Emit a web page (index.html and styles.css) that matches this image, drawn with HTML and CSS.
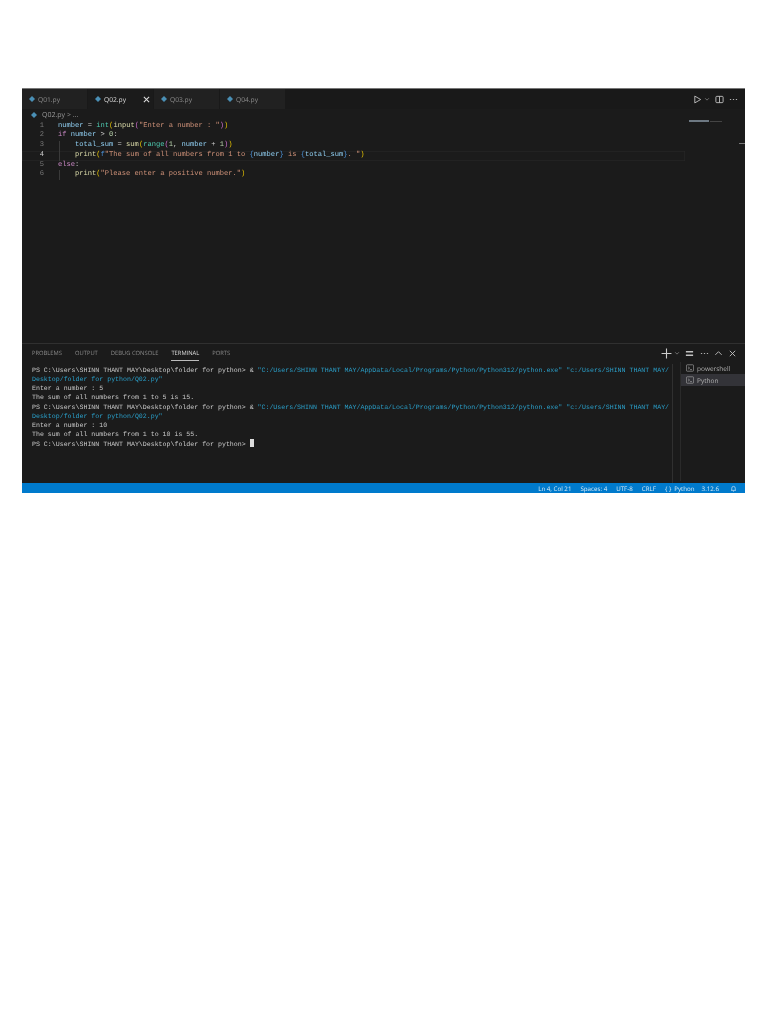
FILE: index.html
```html
<!DOCTYPE html>
<html lang="en">
<head>
<meta charset="utf-8">
<title>Q02.py</title>
<link rel="stylesheet" href="styles.css">
</head>
<body>
<main class="window">
  <header class="tabbar">
    <div class="tab"><span class="pydot"></span>Q01.py</div>
    <div class="tab active"><span class="pydot"></span>Q02.py<svg class="close" viewBox="0 0 8 8"><path d="M1 1l6 6M7 1L1 7"/></svg></div>
    <div class="tab"><span class="pydot"></span>Q03.py</div>
    <div class="tab"><span class="pydot"></span>Q04.py</div>
    <div class="actions">
      <svg class="ico" viewBox="0 0 10 10"><path d="M2 1.200v7.600L8.500 5z"/></svg>
      <svg class="ico small" viewBox="0 0 8 8"><path d="M1.500 3L4 5.500 6.500 3"/></svg>
      <svg class="ico" viewBox="0 0 10 10"><rect x="1" y="1.500" width="8" height="7" rx="1"/><path d="M5 1.500v7"/></svg>
      <svg class="ico" viewBox="0 0 10 10"><path d="M1 5h1.400M4.300 5h1.400M7.600 5H9"/></svg>
    </div>
  </header>
  <div class="crumbs"><span class="pydot"></span>Q02.py &gt; ...</div>
  <section class="editor">
    <div class="minimap"><span class="mm a"></span><span class="mm b"></span></div>
    <span class="scrollmark"></span>
    <div class="line"><span class="ln">1</span><code><i class="v">number</i> = <i class="t">int</i><i class="y">(</i><i class="f">input</i><i class="p">(</i><i class="s">"Enter a number : "</i><i class="p">)</i><i class="y">)</i></code></div>
    <div class="line"><span class="ln">2</span><code><i class="k">if</i> <i class="v">number</i> &gt; <i class="n">0</i>:</code></div>
    <div class="line"><span class="ln">3</span><code class="in"><i class="v">total_sum</i> = <i class="f">sum</i><i class="y">(</i><i class="t">range</i><i class="p">(</i><i class="n">1</i>, <i class="v">number</i> + <i class="n">1</i><i class="p">)</i><i class="y">)</i></code></div>
    <div class="line cur"><span class="ln">4</span><code class="in"><i class="f">print</i><i class="y">(</i><i class="b">f</i><i class="s">"The sum of all numbers from 1 to </i><i class="b">{</i><i class="v">number</i><i class="b">}</i><i class="s"> is </i><i class="b">{</i><i class="v">total_sum</i><i class="b">}</i><i class="s">. "</i><i class="y">)</i></code></div>
    <div class="line"><span class="ln">5</span><code><i class="k">else</i>:</code></div>
    <div class="line"><span class="ln">6</span><code class="in"><i class="f">print</i><i class="y">(</i><i class="s">"Please enter a positive number."</i><i class="y">)</i></code></div>
  </section>
  <section class="panel">
    <nav class="panelbar">
      <span>PROBLEMS</span><span>OUTPUT</span><span>DEBUG CONSOLE</span><span class="on">TERMINAL</span><span>PORTS</span>
      <div class="panelicons">
        <svg class="ico big" viewBox="0 0 10 10"><path d="M5 .5v9M.5 5h9"/></svg>
        <svg class="ico small" viewBox="0 0 8 8"><path d="M1.500 3L4 5.500 6.500 3"/></svg>
        <svg class="ico" viewBox="0 0 10 10"><path d="M1 3h8M1 7h8" stroke-width="1.600"/></svg>
        <svg class="ico" viewBox="0 0 10 10"><path d="M1 5h1.400M4.300 5h1.400M7.600 5H9"/></svg>
        <svg class="ico" viewBox="0 0 10 10"><path d="M1.500 6.500L5 3l3.500 3.500"/></svg>
        <svg class="ico" viewBox="0 0 10 10"><path d="M2 2l6 6M8 2L2 8"/></svg>
      </div>
    </nav>
    <div class="termwrap">
      <pre class="term">PS C:\Users\SHINN THANT MAY\Desktop\folder for python&gt; &amp; <i class="c">"C:/Users/SHINN THANT MAY/AppData/Local/Programs/Python/Python312/python.exe" "c:/Users/SHINN THANT MAY/</i>
<i class="c">Desktop/folder for python/Q02.py"</i>
Enter a number : 5
The sum of all numbers from 1 to 5 is 15.
PS C:\Users\SHINN THANT MAY\Desktop\folder for python&gt; &amp; <i class="c">"C:/Users/SHINN THANT MAY/AppData/Local/Programs/Python/Python312/python.exe" "c:/Users/SHINN THANT MAY/</i>
<i class="c">Desktop/folder for python/Q02.py"</i>
Enter a number : 10
The sum of all numbers from 1 to 10 is 55.
PS C:\Users\SHINN THANT MAY\Desktop\folder for python&gt; <b class="cursor"></b></pre>
      <aside class="shells">
        <div class="shelllist">
          <div class="shell"><svg class="tico" viewBox="0 0 10 10"><rect x=".5" y="1" width="9" height="8" rx="1"/><path d="M2.500 3.500L4.500 5l-2 1.500M5 7h2.500"/></svg>powershell</div>
          <div class="shell sel"><svg class="tico" viewBox="0 0 10 10"><rect x=".5" y="1" width="9" height="8" rx="1"/><path d="M2.500 3.500L4.500 5l-2 1.500M5 7h2.500"/></svg>Python</div>
        </div>
      </aside>
    </div>
  </section>
  <footer class="status">
    <span>Ln 4, Col 21</span><span>Spaces: 4</span><span>UTF-8</span><span>CRLF</span><span class="lang"><span>{ }</span><span>Python</span></span><span>3.12.6</span>
    <svg class="bell" viewBox="0 0 10 10"><path d="M2.500 7V4.500a2.500 2.500 0 0 1 5 0V7l.8.700H1.700zM4.200 8.800h1.600"/></svg>
  </footer>
</main>
</body>
</html>
```
FILE: styles.css
```css
* { box-sizing: border-box; }
html, body { margin: 0; background: #fff; }
body { padding: 88px 23px 0 22px; height: 1024px; overflow: hidden; }
i { font-style: normal; }
.window {
  height: 405px;
  display: flex;
  flex-direction: column;
  background: #1b1b1b;
  border-top: 1px solid #777;
  font-family: "Open Sans", "Liberation Sans", sans-serif;
  text-rendering: geometricPrecision;
  filter: blur(.35px);
  overflow: hidden;
}
.tabbar { height: 20px; display: flex; background: #191919; flex: none; }
.tab {
  width: 66px;
  padding-left: 7px;
  display: flex;
  align-items: center;
  gap: 3px;
  font-size: 6.700px;
  color: #8a8a8a;
  background: #212121;
  border-right: 1px solid #191919;
}
.tab.active { background: #1b1b1b; color: #d8d8d8; }
.pydot { width: 6px; height: 6px; background: #4a8fb5; clip-path: polygon(50% 0, 100% 50%, 50% 100%, 0 50%); flex: none; }
.close { width: 7px; height: 7px; margin-left: 14px; fill: none; stroke: #ddd; stroke-width: 1.200; }
.actions { margin-left: auto; display: flex; align-items: center; gap: 5px; padding-right: 7px; }
.ico { width: 9px; height: 9px; fill: none; stroke: #c2c2c2; stroke-width: 1; flex: none; }
.ico.small { width: 6px; height: 6px; margin-left: -3px; stroke: #888; }
.ico.big { width: 11px; height: 11px; stroke: #ccc; }
.crumbs {
  height: 10px;
  flex: none;
  padding-left: 9px;
  display: flex;
  align-items: center;
  gap: 5px;
  font-size: 7px;
  color: #9a9a9a;
  margin-top: 1px;
}
.editor {
  position: relative;
  height: 224px;
  flex: none;
  padding-top: 1.500px;
  border-bottom: 1px solid #303030;
  font-family: "Liberation Mono", monospace;
  font-size: 7.100px;
}
.minimap { position: absolute; top: 0; right: 23px; display: flex; gap: 1px; align-items: center; }
.mm { height: 2px; display: block; }
.mm.a { width: 20px; background: #6d7882; }
.mm.b { width: 12px; height: 1px; background: #444; }
.scrollmark { position: absolute; top: 23px; right: 0; width: 6px; height: 1px; background: #777; }
.line { height: 9.800px; line-height: 9.800px; display: flex; color: #ccc; }
.line.cur { box-shadow: inset 0 0 0 .5px #2a2a2a; margin-right: 60px; }
.ln { width: 22px; text-align: right; color: #777; flex: none; }
.cur .ln { color: #ccc; }
code { font: inherit; margin-left: 14px; white-space: pre; }
code.in { margin-left: 15px; padding-left: 15px; border-left: 1px solid #3a3a3a; }
.v { color: #8fcdf0; }
.t { color: #4ec9b0; }
.f { color: #dcdcaa; }
.s { color: #ce9178; }
.k { color: #c586c0; }
.n { color: #b5cea8; }
.y { color: #e8c400; }
.p { color: #d070d0; }
.b { color: #4a90d6; }
.panel { flex: 1; min-height: 0; display: flex; flex-direction: column; }
.panelbar {
  height: 21px;
  flex: none;
  display: flex;
  align-items: center;
  gap: 13px;
  padding-left: 10px;
  padding-bottom: 3px;
  font-size: 5.800px;
  color: #8a8a8a;
}
.panelbar .on { color: #ddd; border-bottom: 1px solid #bbb; padding: 3px 0; margin-top: 1px; }
.panelicons { margin-left: auto; display: flex; align-items: center; gap: 5.200px; padding-right: 8px; }
.termwrap { flex: 1; min-height: 0; display: flex; }
.term {
  margin: 0;
  flex: 1;
  min-width: 0;
  padding: 1px 0 0 10px;
  font-family: "Liberation Mono", monospace;
  font-size: 6.600px;
  line-height: 9.150px;
  color: #c8c8c8;
  white-space: pre;
  overflow: hidden;
}
.term .c { color: #2a9fc9; }
.cursor { display: inline-block; width: 4px; height: 8px; background: #ddd; vertical-align: -1px; }
.shells { width: 73px; flex: none; border-left: 1px solid #303030; padding-left: 7px; margin-top: -1px; font-size: 6.500px; color: #b0b0b0; }
.shelllist { border-left: 1px solid #2a2a2a; height: 100%; margin-top: -2px; padding-top: 0; }
.shell { height: 12px; display: flex; align-items: center; gap: 3px; padding-left: 5px; }
.shell.sel { background: #333338; }
.tico { width: 8px; height: 8px; fill: none; stroke: #aaa; stroke-width: .8; flex: none; }
.status {
  height: 10px;
  flex: none;
  display: flex;
  justify-content: flex-end;
  align-items: center;
  gap: 9px;
  padding-right: 8px;
  background: #007acc;
  color: #d8ecf8;
  font-size: 6.200px;
}
.lang { display: flex; gap: 3px; margin-right: -2px; }
.bell { width: 7px; height: 7px; fill: none; stroke: #e0eef8; stroke-width: .9; margin-left: 2px; }
```
